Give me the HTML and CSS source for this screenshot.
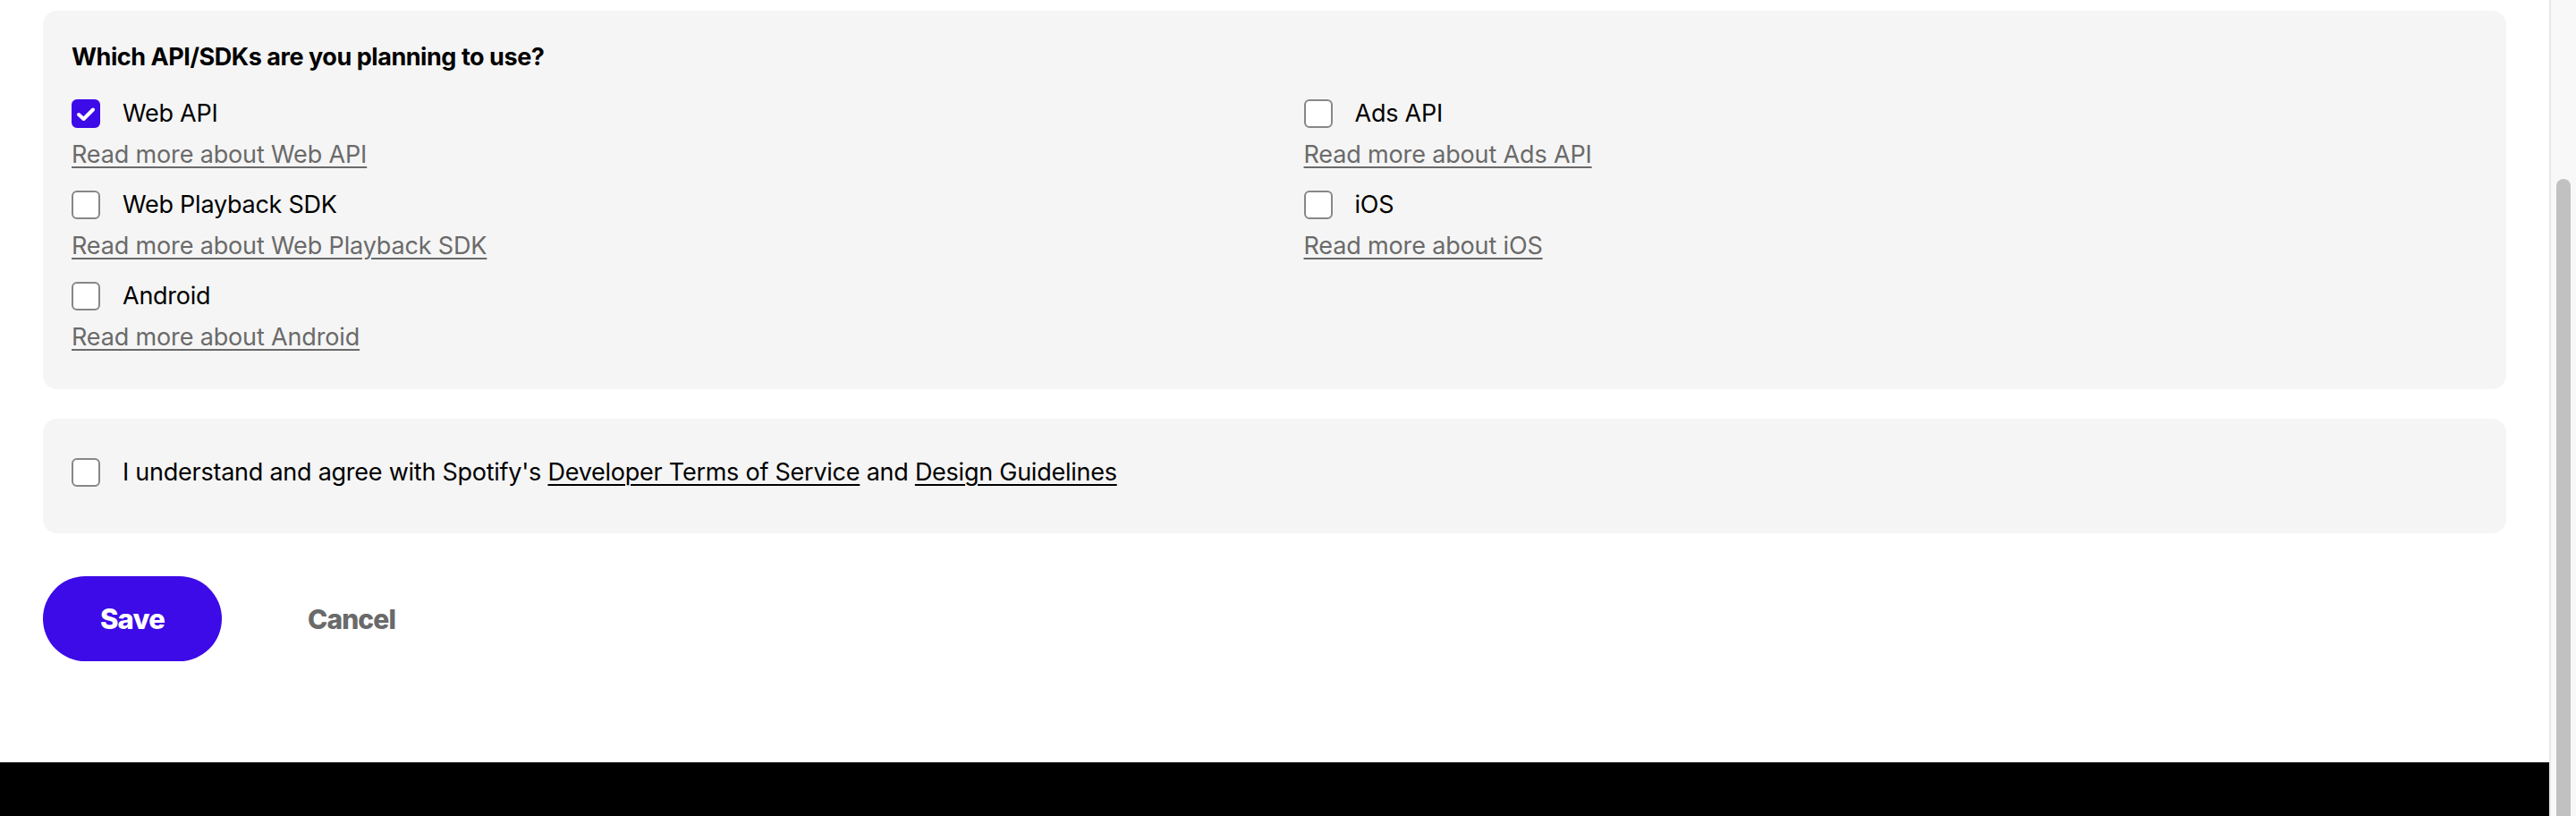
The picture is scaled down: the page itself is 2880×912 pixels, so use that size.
FILE: index.html
```html
<!DOCTYPE html>
<html lang="en">
<head>
<meta charset="utf-8">
<title>Create app</title>
<link rel="stylesheet" href="styles.css">
</head>
<body>
<div class="page">
  <main class="main">
    <section class="card card-apis">
      <h2 class="heading">Which API/SDKs are you planning to use?</h2>
      <div class="options">
        <div class="option">
          <label class="check-row">
            <span class="box checked">
              <svg viewBox="0 0 32 32" width="32" height="32"><path d="M8 17 L13.5 22 L24 11.5" fill="none" stroke="#fff" stroke-width="4" stroke-linecap="round" stroke-linejoin="round"/></svg>
            </span>
            <span class="label">Web API</span>
          </label>
          <a class="more" href="#">Read more about Web API</a>
        </div>
        <div class="option">
          <label class="check-row">
            <span class="box"></span>
            <span class="label">Ads API</span>
          </label>
          <a class="more" href="#">Read more about Ads API</a>
        </div>
        <div class="option">
          <label class="check-row">
            <span class="box"></span>
            <span class="label">Web Playback SDK</span>
          </label>
          <a class="more" href="#">Read more about Web Playback SDK</a>
        </div>
        <div class="option">
          <label class="check-row">
            <span class="box"></span>
            <span class="label">iOS</span>
          </label>
          <a class="more" href="#">Read more about iOS</a>
        </div>
        <div class="option">
          <label class="check-row">
            <span class="box"></span>
            <span class="label">Android</span>
          </label>
          <a class="more" href="#">Read more about Android</a>
        </div>
      </div>
    </section>

    <section class="card card-terms">
      <label class="check-row">
        <span class="box"></span>
        <span class="label">I understand and agree with Spotify's <a class="term-link" href="#">Developer Terms of Service</a> and <a class="term-link" href="#">Design Guidelines</a></span>
      </label>
    </section>

    <div class="actions">
      <button class="btn-save" type="button">Save</button>
      <button class="btn-cancel" type="button">Cancel</button>
    </div>

    <footer class="footer"></footer>
  </main>
  <div class="scrollbar"><div class="thumb"></div></div>
</div>
</body>
</html>
```

FILE: styles.css
```css
* { box-sizing: border-box; }
html, body {
  margin: 0;
  padding: 0;
  height: 100%;
  overflow: hidden;
}
body {
  font-family: Inter, "Noto Sans", "Liberation Sans", sans-serif;
  color: #000;
  background: #fff;
}
.page {
  display: flex;
  height: 912px;
}
.main {
  flex: 1;
  display: flex;
  flex-direction: column;
  padding-top: 12px;
  min-width: 0;
}
.card {
  margin: 0 48px;
  background: #f5f5f5;
  border-radius: 16px;
}
.card-apis {
  padding: 32px 32px 38px;
}
.heading {
  margin: 0 0 23px;
  font-size: 27px;
  line-height: 40px;
  font-weight: 700;
  letter-spacing: -0.45px;
}
.options {
  display: grid;
  grid-template-columns: 1fr 1fr;
  column-gap: 65px;
  row-gap: 16px;
}
.option {
  display: flex;
  flex-direction: column;
  gap: 6px;
  align-items: flex-start;
}
.check-row {
  display: flex;
  align-items: center;
  gap: 25px;
  height: 40px;
}
.box {
  flex: none;
  width: 32px;
  height: 32px;
  border: 2.5px solid #878787;
  border-radius: 6px;
  background: #fff;
  display: flex;
  align-items: center;
  justify-content: center;
}
.box.checked {
  background: #3d0ae8;
  border-color: #3d0ae8;
}
.box svg { display: block; flex: none; }
.label {
  font-size: 27px;
  line-height: 40px;
  letter-spacing: -0.25px;
  white-space: nowrap;
}
.more {
  font-size: 27px;
  line-height: 40px;
  letter-spacing: -0.15px;
  color: #6a6a6a;
  text-decoration: underline;
  text-decoration-thickness: 2px;
  text-underline-offset: 4px;
}
.card-terms {
  margin-top: 33px;
  padding: 40px 32px 48px;
}
.term-link {
  color: #000;
  text-decoration: underline;
  text-decoration-thickness: 2px;
  text-underline-offset: 4px;
}
.actions {
  display: flex;
  align-items: center;
  margin: 48px 48px 0;
}
.btn-save {
  height: 95px;
  width: 200px;
  border: 0;
  border-radius: 48px;
  background: #3d0ae8;
  color: #fff;
  font-family: inherit;
  font-size: 31px;
  font-weight: 800;
  letter-spacing: -0.8px;
  padding: 0;
}
.btn-cancel {
  margin-left: 96px;
  border: 0;
  background: transparent;
  color: #6a6a6a;
  font-family: inherit;
  font-size: 30px;
  font-weight: 800;
  letter-spacing: -0.9px;
  padding: 0;
}
.footer {
  margin-top: 113px;
  flex: 1;
  background: #000;
}
.scrollbar {
  flex: none;
  width: 30px;
  background: #f8f8f8;
  border-left: 2px solid #e8e8e8;
  display: flex;
  flex-direction: column;
  padding: 200px 6px 0 6px;
}
.thumb {
  flex: 1;
  background: #c1c1c1;
  border-radius: 8px 8px 0 0;
}
```
